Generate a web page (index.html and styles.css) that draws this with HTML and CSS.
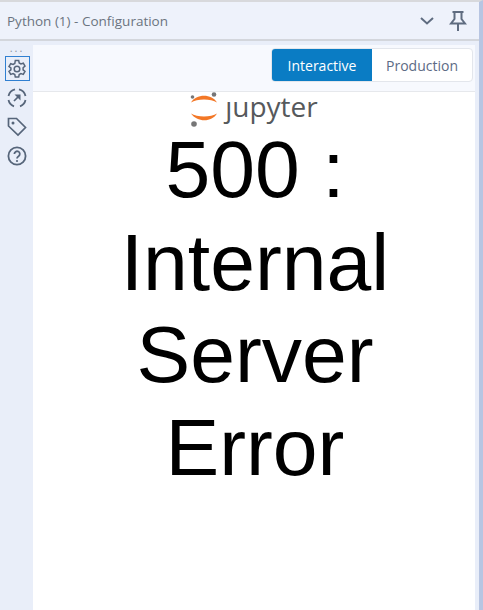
FILE: index.html
```html
<!DOCTYPE html>
<html lang="en">
<head>
    <meta charset="UTF-8">
    <meta name="viewport" content="width=device-width, initial-scale=1.0">
    <title>Python (1) - Configuration</title>
    <link rel="stylesheet" href="styles.css">
</head>
<body>
<div class="window">
    <!-- Title bar -->
    <div class="titlebar">
        <span class="title">Python (1) - Configuration</span>
        <svg class="chevron" width="14" height="8" viewBox="0 0 14 8"><path d="M1 1l6 5.500L13 1" fill="none" stroke="#5f6c80" stroke-width="2"/></svg>
        <svg class="pin" width="18" height="20" viewBox="0 0 18 20"><path d="M3.500 1h11M5.500 1v7L2 12.500h14L12.500 8V1M9 12.500V20" fill="none" stroke="#5f6c80" stroke-width="2"/></svg>
    </div>

    <div class="main">
        <!-- Side icons -->
        <div class="sidebar">
            <div class="dots">...</div>
            <div class="side-icon active">
                <svg width="20" height="20" viewBox="0 0 20 20" fill="none" stroke="#56657a" stroke-width="1.500"><path d="M8.300 1.500h3.400l.5 2.500 1.700 1 2.400-.8 1.700 2.900-1.900 1.700v2l1.900 1.700-1.700 2.900-2.400-.8-1.700 1-.5 2.500H8.300l-.5-2.500-1.700-1-2.400.8-1.700-2.900 1.900-1.700v-2L2 7.600l1.700-2.900 2.400.8 1.700-1z"/><circle cx="10" cy="10" r="2.800"/></svg>
            </div>
            <div class="side-icon">
                <svg width="20" height="20" viewBox="0 0 20 20" fill="none" stroke="#56657a" stroke-width="1.800"><path d="M1.500 8A8.800 8.800 0 0 1 8 1.400M12 1.400A8.800 8.800 0 0 1 18.500 8M18.500 12A8.800 8.800 0 0 1 13 18.300M7 18.300A8.800 8.800 0 0 1 1.500 12"/><path d="M7 13l4.500-4.500" stroke-width="1.700"/><path d="M7.500 6.500h6v6z" fill="#56657a" stroke="none"/></svg>
            </div>
            <div class="side-icon">
                <svg width="20" height="20" viewBox="0 0 20 20" fill="none" stroke="#56657a" stroke-width="1.700"><path d="M1.500 1.500h8l9 9-7.500 7.500-9.500-9z"/><circle cx="6" cy="6" r="1.500" fill="#56657a" stroke="none"/></svg>
            </div>
            <div class="side-icon">
                <svg width="20" height="20" viewBox="0 0 20 20" fill="none" stroke="#56657a" stroke-width="1.800"><circle cx="10" cy="10" r="8.600"/><path d="M7.400 8a2.700 2.700 0 1 1 4.200 2.200c-1 .7-1.600 1.100-1.600 2.300"/><circle cx="10" cy="15" r="1.100" fill="#56657a" stroke="none"/></svg>
            </div>
        </div>

        <div class="content">
            <!-- Interactive / Production switch -->
            <div class="toolbar">
                <div class="switch">
                    <span class="switch-btn on">Interactive</span>
                    <span class="switch-btn">Production</span>
                </div>
            </div>

            <div class="page">
                <div class="logo">
                    <svg width="28" height="35" viewBox="0 0 28 35"><path d="M1 10.500C6 1.500 22 1.500 27 10.500C21 6.500 7 6.500 1 10.500z" fill="#f37726"/><path d="M1 21.500C7 30.500 22 30.500 27 21.500C21 25.500 7 25.500 1 21.500z" fill="#f37726"/><circle cx="2.500" cy="5" r="1.800" fill="#767677"/><circle cx="24" cy="2.500" r="2.300" fill="#767677"/><circle cx="4" cy="32" r="2.800" fill="#767677"/></svg>
                    <span class="logo-text">ȷupyter</span>
                </div>
                <h1>500 : Internal Server Error</h1>
            </div>
        </div>
    </div>
</div>
</body>
</html>
```

FILE: styles.css
```css
html, body {
    margin: 0;
    height: 100%;
}
body {
    font-family: "Open Sans", "Noto Sans", sans-serif;
    background: #ffffff;
    overflow: hidden;
}
.window {
    height: 610px;
    display: flex;
    flex-direction: column;
    border-top: 2px solid #d8d9dc;
    border-right: 4px solid #b7c5e2;
    box-sizing: border-box;
}
.titlebar {
    height: 37px;
    flex: none;
    display: flex;
    align-items: center;
    padding: 0 12px 0 7px;
    background: #eef2fb;
    border-bottom: 2px solid #d3d6dc;
}
.title {
    flex: 1;
    font-size: 13.500px;
    color: #6b7480;
}
.chevron {
    margin-right: 15px;
}
.main {
    flex: 1;
    display: flex;
    background: #e9eef9;
}
.sidebar {
    width: 33px;
    flex: none;
    display: flex;
    flex-direction: column;
    align-items: center;
    padding: 4px 0 0 1px;
    box-sizing: border-box;
}
.dots {
    height: 11px;
    line-height: 5px;
    font-size: 11px;
    letter-spacing: 2px;
    color: #8a93a0;
}
.side-icon {
    width: 25px;
    height: 25px;
    margin-bottom: 4px;
    display: flex;
    align-items: center;
    justify-content: center;
    box-sizing: border-box;
    border: 1px solid transparent;
}
.side-icon.active {
    border-color: #2f7fd1;
}
.content {
    flex: 1;
    display: flex;
    flex-direction: column;
    margin: 4px 4px 0 0;
}
.toolbar {
    height: 47px;
    flex: none;
    display: flex;
    justify-content: flex-end;
    align-items: flex-start;
    padding: 3px 2px 0 0;
    box-sizing: border-box;
    background: #f7f9fe;
    border-bottom: 1px solid #e6e8ec;
}
.switch {
    display: flex;
    height: 34px;
    border-radius: 4px;
    overflow: hidden;
    border: 1px solid #e3e6ec;
    background: #ffffff;
    box-sizing: border-box;
}
.switch-btn {
    width: 100px;
    display: flex;
    align-items: center;
    justify-content: center;
    font-size: 14px;
    color: #5d6b85;
}
.switch-btn.on {
    background: #0a7cc4;
    color: #ffffff;
}
.page {
    flex: 1;
    background: #ffffff;
    text-align: center;
}
.logo {
    height: 35px;
    display: flex;
    justify-content: center;
    gap: 7px;
    margin-bottom: -4px;
}
.logo-text {
    font-size: 28px;
    line-height: 28px;
    color: #56595c;
}
h1 {
    margin: 0;
    padding: 0 9px 0 11px;
    font-family: "Liberation Sans", Arial, sans-serif;
    font-size: 80.500px;
    font-weight: 400;
    line-height: 92.500px;
    color: #000000;
}
```
